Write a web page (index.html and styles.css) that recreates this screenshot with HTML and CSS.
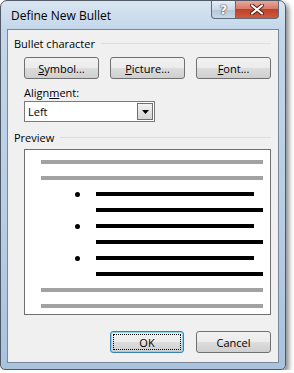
FILE: index.html
```html
<!DOCTYPE html>
<html>
<head>
    <title>Define New Bullet</title>
    <link rel="stylesheet" href="styles.css">
</head>
<body>

<div class="window">
    <div class="titlebar">
        <span class="title">Define New Bullet</span>
        <div class="controls">
            <button class="ctl help">?</button>
            <button class="ctl close">
                <svg width="16" height="11" viewBox="0 0 16 11">
                    <path d="M3 1.5 L13 9.5 M13 1.5 L3 9.5" stroke="#5a1a14" stroke-width="4" stroke-linecap="round"/>
                    <path d="M3 1.5 L13 9.5 M13 1.5 L3 9.5" stroke="#fff" stroke-width="2.2" stroke-linecap="round"/>
                </svg>
            </button>
        </div>
    </div>

    <div class="client">
        <div class="group-head"><span>Bullet character</span></div>
        <div class="btn-row">
            <button class="btn"><u>S</u>ymbol...</button>
            <button class="btn"><u>P</u>icture...</button>
            <button class="btn"><u>F</u>ont...</button>
        </div>

        <div class="field-label">Align<u>m</u>ent:</div>
        <div class="select">
            <span class="select-value">Left</span>
            <span class="select-arrow"><svg width="7" height="4" viewBox="0 0 7 4"><path d="M0 0 H7 L3.5 4 Z" fill="#000"/></svg></span>
        </div>

        <div class="group-head preview-head"><span>Preview</span></div>
        <div class="preview">
            <div class="pline gray"></div>
            <div class="pline gray"></div>
            <div class="item"><span class="dot"></span><div class="pline black short"></div></div>
            <div class="item"><div class="pline black"></div></div>
            <div class="item"><span class="dot"></span><div class="pline black short"></div></div>
            <div class="item"><div class="pline black"></div></div>
            <div class="item"><span class="dot"></span><div class="pline black short"></div></div>
            <div class="item"><div class="pline black"></div></div>
            <div class="pline gray"></div>
            <div class="pline gray"></div>
        </div>

        <div class="footer">
            <button class="btn default"><span class="focus">OK</span></button>
            <button class="btn">Cancel</button>
        </div>
    </div>
</div>

</body>
</html>
```

FILE: styles.css
```css
body {
    margin: 0;
    padding: 0;
    background-color: #fff;
    font-family: "Open Sans", "Noto Sans", sans-serif;
    font-size: 11px;
    color: #000;
}
.window {
    width: 286px;
    height: 370px;
    box-sizing: border-box;
    border: 1px solid #4f5a66;
    border-radius: 7px 7px 5px 5px;
    background: linear-gradient(#d9e5f1 0%, #c3d6ea 8%, #b6cde5 60%, #a9c3df 100%);
    box-shadow: 3px 3px 5px rgba(0, 0, 0, 0.45);
}
.titlebar {
    height: 28px;
    display: flex;
    align-items: flex-start;
}
.title {
    font-size: 12px;
    margin: 6px 0 0 10px;
}
.controls {
    margin-left: auto;
    margin-right: 6px;
    display: flex;
}
.ctl {
    height: 18px;
    border: 1px solid #5d6c7d;
    border-top: none;
    padding: 0;
    margin: 0;
    display: flex;
    align-items: center;
    justify-content: center;
    font-family: "DejaVu Sans", sans-serif;
}
.help {
    width: 25px;
    border-radius: 0 0 0 4px;
    background: linear-gradient(#e6edf5 0%, #ccd8e6 50%, #b6c6d8 51%, #c8d6e6 100%);
    color: #fff;
    font-size: 13px;
    font-weight: bold;
    text-shadow: 0 0 2px #445, 0 0 1px #223;
}
.close {
    width: 43px;
    border-left: none;
    border-radius: 0 0 4px 0;
    background: linear-gradient(#e9a99c 0%, #d87a68 45%, #c0402c 50%, #d25a3c 100%);
}
.client {
    height: 334px;
    margin: 0 6px;
    box-sizing: border-box;
    border: 1px solid #7a8796;
    background-color: #f0f0f0;
    padding: 0 7px 0 6px;
    display: flex;
    flex-direction: column;
}
.group-head {
    display: flex;
    align-items: center;
    height: 12px;
    margin-top: 7px;
}
.group-head::after {
    content: "";
    flex: 1;
    border-top: 1px solid #d5dfe5;
    margin-left: 6px;
}
.btn-row {
    display: flex;
    justify-content: space-between;
    margin: 8px 0 0 10px;
}
.btn {
    width: 75px;
    height: 22px;
    box-sizing: border-box;
    border: 1px solid #707070;
    border-radius: 3px;
    background: linear-gradient(#f2f2f2 0%, #ebebeb 50%, #dddddd 51%, #cfcfcf 100%);
    font-family: inherit;
    font-size: 11px;
    padding: 0;
    color: #000;
}
.field-label {
    margin: 6px 0 0 10px;
    height: 14px;
}
.select {
    width: 131px;
    height: 21px;
    box-sizing: border-box;
    margin: 2px 0 0 10px;
    border: 1px solid #7a7a7a;
    background-color: #fff;
    display: flex;
    align-items: center;
}
.select-value {
    flex: 1;
    padding-left: 3px;
}
.select-arrow {
    width: 16px;
    height: 17px;
    margin-right: 1px;
    box-sizing: border-box;
    border: 1px solid #707070;
    background: linear-gradient(#f2f2f2, #d6d6d6);
    display: flex;
    align-items: center;
    justify-content: center;
}
.preview-head {
    margin-top: 9px;
}
.preview {
    height: 166px;
    box-sizing: border-box;
    margin: 6px 0 0 10px;
    border: 1px solid #707070;
    background-color: #fff;
    padding: 10px 7px 0 16px;
    display: flex;
    flex-direction: column;
    gap: 12px;
}
.pline {
    height: 4px;
}
.gray {
    background-color: #a2a2a2;
}
.black {
    background-color: #000;
    flex: 1;
}
.item {
    display: flex;
    align-items: center;
    padding-left: 55px;
    height: 4px;
}
.short {
    margin-right: 9px;
}
.dot {
    width: 5px;
    height: 5px;
    border-radius: 50%;
    background-color: #000;
    margin-left: -21px;
    margin-right: 16px;
}
.footer {
    display: flex;
    justify-content: flex-end;
    gap: 12px;
    margin-top: 16px;
}
.btn.default {
    width: 74px;
    border-color: #3c7fb1;
    box-shadow: inset 0 0 0 1px #8fd3f1;
    padding: 2px;
}
.focus {
    display: flex;
    align-items: center;
    justify-content: center;
    height: 100%;
    border: 1px dotted #000;
    box-sizing: border-box;
}
```
